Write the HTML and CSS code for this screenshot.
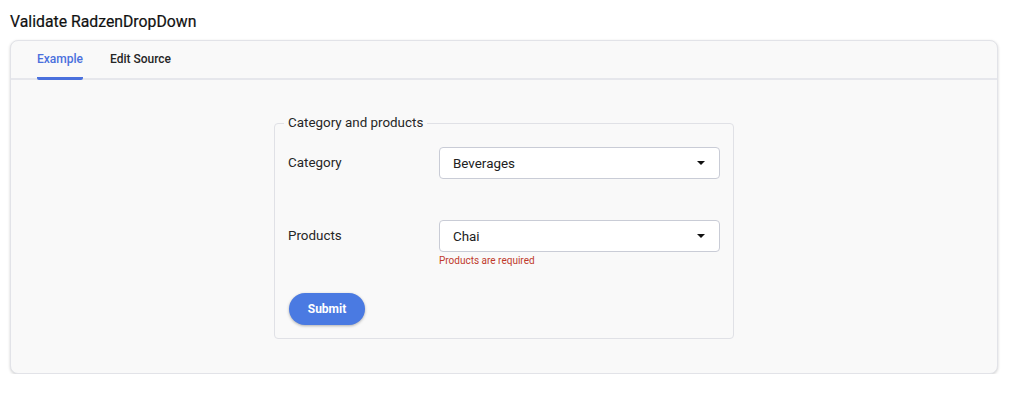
FILE: index.html
```html
<!DOCTYPE html>
<html>
<head>
<meta charset="utf-8">
<link rel="stylesheet" href="styles.css">
</head>
<body>
<h1 class="title">Validate RadzenDropDown</h1>
<div class="card">
  <div class="tabs">
    <div class="tab active">Example</div>
    <div class="tab">Edit Source</div>
  </div>
  <div class="card-body">
    <fieldset class="group">
      <legend>Category and products</legend>
      <div class="row">
        <div class="label">Category</div>
        <div class="field">
          <div class="dropdown"><span>Beverages</span><span class="caret"></span></div>
        </div>
      </div>
      <div class="row">
        <div class="label">Products</div>
        <div class="field">
          <div class="dropdown"><span>Chai</span><span class="caret"></span></div>
          <div class="error">Products are required</div>
        </div>
      </div>
      <button class="submit">Submit</button>
    </fieldset>
  </div>
</div>
</body>
</html>
```
FILE: styles.css
```css
* { box-sizing: border-box; }
body {
  margin: 0;
  padding: 0 10px;
  background: #fff;
  font-family: Roboto, "Liberation Sans", sans-serif;
  color: #212121;
}
.title {
  margin: 0;
  padding-top: 12px;
  height: 40px;
  font-size: 15.8px;
  line-height: 20px;
  font-weight: 400;
  color: #111;
  -webkit-text-stroke: 0.2px #111;
}
.card {
  width: 988px;
  height: 334px;
  background: #f9f9f9;
  border: 1px solid #e2e3e8;
  border-radius: 8px;
  box-shadow: 0 1px 3px rgba(0,0,0,0.18);
}
.tabs {
  display: flex;
  height: 39px;
  border-bottom: 2px solid #e6e7ec;
  padding-left: 26px;
  gap: 27px;
}
.tab {
  font-size: 12px;
  font-weight: 500;
  line-height: 37px;
  color: #262626;
  height: 39px;
}
.tab.active {
  color: #4a70dd;
  border-bottom: 3px solid #4a70dd;
  border-radius: 2px;
}
.card-body {
  padding-top: 33px;
  display: flex;
  justify-content: center;
}
.group {
  width: 460px;
  margin: 0;
  border: 1px solid #e0e1e6;
  border-radius: 4px;
  padding: 14px 13px 13px 13px;
  min-width: 0;
}
.group legend {
  font-size: 13.4px;
  line-height: 20px;
  padding: 0 4px;
  margin-left: -4px;
  color: #262626;
}
.row {
  display: grid;
  grid-template-columns: 151px 1fr;
  height: 73px;
}
.label {
  font-size: 13.4px;
  line-height: 32px;
  color: #262626;
}
.dropdown {
  height: 32px;
  background: #fff;
  border: 1px solid #c9ccd6;
  border-radius: 4px;
  display: flex;
  align-items: center;
  justify-content: space-between;
  padding: 0 14px 0 13px;
  font-size: 13.4px;
  color: #212121;
}
.caret {
  width: 0;
  height: 0;
  border-left: 4px solid transparent;
  border-right: 4px solid transparent;
  border-top: 4px solid #111;
}
.error {
  font-size: 10px;
  line-height: 12px;
  margin-top: 3px;
  color: #c0392b;
}
.submit {
  display: block;
  width: 76px;
  height: 32px;
  border: none;
  border-radius: 16px;
  background: #4a7ae2;
  color: #fff;
  font-family: Roboto, "Liberation Sans", sans-serif;
  font-size: 12px;
  font-weight: 700;
  box-shadow: 0 1px 3px rgba(0,0,0,0.3);
  margin-left: 1px;
  padding: 0;
}
```
